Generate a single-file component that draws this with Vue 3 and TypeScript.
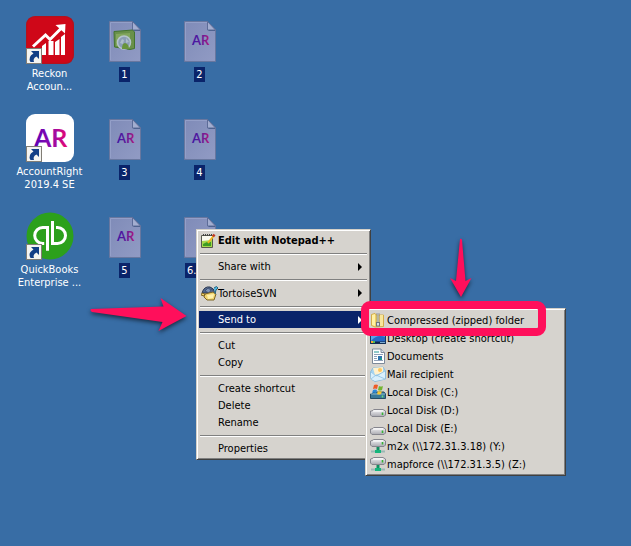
<script setup lang="ts">
interface DesktopItem {
  kind: 'reckon' | 'ar' | 'qb' | 'doc-image' | 'doc-ar' | 'doc-blank'
  lines: string[]
  selected?: boolean
  cut?: boolean
}
interface MenuItem {
  label: string
  icon?: string
  bold?: boolean
  sub?: boolean
  active?: boolean
}

const items: DesktopItem[] = [
  { kind: 'reckon', lines: ['Reckon', 'Accoun...'] },
  { kind: 'doc-image', lines: ['1'], selected: true },
  { kind: 'doc-ar', lines: ['2'], selected: true },
  { kind: 'ar', lines: ['AccountRight', '2019.4 SE'] },
  { kind: 'doc-ar', lines: ['3'], selected: true },
  { kind: 'doc-ar', lines: ['4'], selected: true },
  { kind: 'qb', lines: ['QuickBooks', 'Enterprise ...'] },
  { kind: 'doc-ar', lines: ['5'], selected: true },
  { kind: 'doc-blank', lines: ['6.'], selected: true, cut: true },
]

const groups: MenuItem[][] = [
  [{ label: 'Edit with Notepad++', icon: 'notepad', bold: true }],
  [{ label: 'Share with', sub: true }],
  [{ label: 'TortoiseSVN', icon: 'tortoise', sub: true }],
  [{ label: 'Send to', sub: true, active: true }],
  [{ label: 'Cut' }, { label: 'Copy' }],
  [{ label: 'Create shortcut' }, { label: 'Delete' }, { label: 'Rename' }],
  [{ label: 'Properties' }],
]

const targets: MenuItem[] = [
  { label: 'Compressed (zipped) folder', icon: 'zip' },
  { label: 'Desktop (create shortcut)', icon: 'desktop' },
  { label: 'Documents', icon: 'document' },
  { label: 'Mail recipient', icon: 'mail' },
  { label: 'Local Disk (C:)', icon: 'system' },
  { label: 'Local Disk (D:)', icon: 'disk' },
  { label: 'Local Disk (E:)', icon: 'disk' },
  { label: 'm2x (\\\\172.31.3.18) (Y:)', icon: 'network' },
  { label: 'mapforce (\\\\172.31.3.5) (Z:)', icon: 'network' },
]
</script>

<template>
  <main class="desktop">
    <svg class="defs" aria-hidden="true">
      <defs>
        <linearGradient id="ar-fill" x1="0" y1="0" x2="1" y2="0">
          <stop offset="0" stop-color="#5a00b4" />
          <stop offset="0.5" stop-color="#8a0bb0" />
          <stop offset="1" stop-color="#f0086c" />
        </linearGradient>
        <linearGradient id="ar-fill-dim" x1="0" y1="0" x2="1" y2="0">
          <stop offset="0" stop-color="#3c14a4" />
          <stop offset="0.5" stop-color="#5c1a9c" />
          <stop offset="1" stop-color="#b0187c" />
        </linearGradient>
        <linearGradient id="page-fill" x1="0" y1="0" x2="1" y2="1">
          <stop offset="0" stop-color="#7f8bb8" />
          <stop offset="1" stop-color="#919bc4" />
        </linearGradient>
        <linearGradient id="drive-fill" x1="0" y1="0" x2="0" y2="1">
          <stop offset="0" stop-color="#f4f4f6" />
          <stop offset="1" stop-color="#a9a9b0" />
        </linearGradient>
      </defs>
    </svg>

    <div class="icons">
      <button v-for="(item, i) in items" :key="i" type="button" class="item">
        <svg class="glyph" width="48" height="48" viewBox="0 0 48 48" aria-hidden="true">
          <template v-if="item.kind === 'reckon'">
            <rect width="48" height="48" rx="10" fill="#cf0718" />
            <path d="M.6 30V10Q.6.6 10 .6H38Q47.4.6 47.4 10V38Q47.4 47.4 38 47.4H16" fill="none" stroke="#b3121d" stroke-width="1.2" />
            <path d="M16 39V30l4-3v12zM22.500 39V25h5V39zM29 39V26l4.500-3v16zM35 39V21l4-3v21z" fill="#fff" />
            <path d="M7 30.500L19.500 19 24 23.500 35 12.500" fill="none" stroke="#fff" stroke-width="3" />
            <path d="M29.500 9L39.500 8 39 17.500z" fill="#fff" />
          </template>
          <template v-else-if="item.kind === 'ar'">
            <rect width="48" height="48" rx="9" fill="#fff" />
            <text class="logo" x="8" y="33" font-size="25" fill="url(#ar-fill)">AR</text>
          </template>
          <template v-else-if="item.kind === 'qb'">
            <circle cx="24" cy="24" r="23.500" fill="#2ca01c" />
            <path d="M21.500 38.700V15.500H16.700a8 8 0 0 0 0 16h1.500M26.500 9V31.500H31.500a8 8 0 0 0 0-16h-1.500" fill="none" stroke="#fff" stroke-width="3" />
          </template>
          <template v-else>
            <path d="M8.500 5.500H31.500L39.500 14V45.500H8.500z" fill="url(#page-fill)" stroke="#68779f" />
            <path d="M9.500 44V6.500H31" fill="none" stroke="#949fc8" />
            <path d="M31.500 5.500V14H39.500z" fill="#a3aed0" stroke="#5d6c98" />
            <path d="M32.500 14.500H39" stroke="#4e628f" />
            <template v-if="item.kind === 'doc-image'">
              <path d="M13 15.500L31.500 14 33.500 16V32.500L29 33.500 13.500 31z" fill="#69904a" stroke="#43742f" />
              <path d="M15 18l14-1v14l-14-1z" fill="#82a65d" />
              <circle cx="23" cy="26.500" r="6.500" fill="#8b9db5" stroke="#b5c4cb" stroke-width="1.500" />
              <path d="M19 27l2-4 2 1-1 4zM25 22l3 4-3 1z" fill="#adbdca" />
              <path d="M21 33q0-6 3-6 4 1 4 6z" fill="#68943a" />
            </template>
            <text v-if="item.kind === 'doc-ar'" class="logo" x="16" y="29" font-size="13" fill="url(#ar-fill-dim)">AR</text>
          </template>
          <g v-if="!item.selected">
            <rect x=".5" y="32.500" width="15" height="15" fill="#f4f4f1" stroke="#817d75" />
            <path d="M5 35H13V43L10.500 40.500Q6.500 42.500 8 46H4.500Q1.500 41 7.500 37.500z" fill="#123f86" />
          </g>
        </svg>
        <span class="label" :class="{ selected: item.selected, cut: item.cut }">
          <span v-for="line in item.lines" :key="line" class="line">{{ line }}</span>
        </span>
      </button>
    </div>

    <div class="menu context" role="menu" aria-label="File actions">
      <div v-for="(group, g) in groups" :key="g" class="group">
        <button
          v-for="entry in group"
          :key="entry.label"
          type="button"
          role="menuitem"
          class="entry"
          :class="{ bold: entry.bold, active: entry.active, tall: entry.icon === 'tortoise' }"
        >
          <span class="slot">
            <svg v-if="entry.icon === 'notepad'" width="16" height="16" viewBox="0 0 16 16" aria-hidden="true">
              <path d="M.500 2.500H11.500V14.500H.500z" fill="#f9f9ef" stroke="#56594d" />
              <path d="M1 8l10-1v7H1z" fill="#a5d84c" />
              <path d="M2 11q5-3 8-2v4H2z" fill="#3c9c23" />
              <path d="M2 2h9" stroke="#444" stroke-width="2" stroke-dasharray="1 1" />
              <path d="M7 10L12.500 3" stroke="#eeb51f" stroke-width="2" />
              <path d="M12 3.500l1.500-2" stroke="#c13524" stroke-width="2.500" />
            </svg>
            <svg v-else-if="entry.icon === 'tortoise'" width="18" height="16" viewBox="0 0 18 16" aria-hidden="true">
              <path d="M1 8Q3 1 9 2q4 1 5 6z" fill="#526990" stroke="#29364f" />
              <path d="M4 6l3-3 3 2-2 3zM10 4l3 2" fill="#8094b6" stroke="#38496b" stroke-width=".8" />
              <path d="M1 8l3 1-1 2-3-1zM4 9l8-2 3 2-2 6-7 0-3-3z" fill="#f1d46e" stroke="#7f6626" />
              <path d="M6 10l7-1-1 4-5 1z" fill="#fff2ae" />
              <path d="M13 3q3-3 4 0l-2 2-1 4" fill="#4bb4df" stroke="#26647f" />
            </svg>
          </span>
          <span>{{ entry.label }}</span>
          <svg v-if="entry.sub" class="caret" width="4" height="8" viewBox="0 0 4 8" aria-hidden="true">
            <path d="M0 0L4 4 0 8z" fill="currentColor" />
          </svg>
        </button>
      </div>
    </div>

    <div class="menu send" role="menu" aria-label="Send to">
      <button v-for="entry in targets" :key="entry.label" type="button" role="menuitem" class="target">
        <svg width="16" height="16" viewBox="0 0 16 16" aria-hidden="true">
          <template v-if="entry.icon === 'zip'">
            <path d="M1.500 2.500L5 1.500 6.500 3H13.500V14.500L5 15 1.500 13.500z" fill="#edcf67" stroke="#d3ac48" />
            <path d="M2 3l3-1v12l-3-1z" fill="#fff1a4" />
            <path d="M10 3h3v11h-3z" fill="#f8e69a" />
            <path d="M8 1.500V13" stroke="#59616c" stroke-width="3" stroke-dasharray="1 1" />
            <path d="M8 1V12" stroke="#c9d1dc" />
            <rect x="6.500" y="10.500" width="3" height="3.500" fill="#dce0e5" stroke="#6e7681" />
          </template>
          <template v-else-if="entry.icon === 'desktop'">
            <rect x=".5" y="1.500" width="15" height="12" fill="#2668c6" stroke="#17385f" />
            <path d="M1 2h14v5Q7 4 1 11z" fill="#5aa4ec" />
            <path d="M1 12.500h14" stroke="#10264a" stroke-width="2" />
            <path d="M1 11h2v2H1z" fill="#f5a42f" />
            <path d="M3 11h2v2H3z" fill="#4dbd56" />
            <path d="M10 12.500h5" stroke="#7facce" />
          </template>
          <template v-else-if="entry.icon === 'document'">
            <path d="M2.500 1H11L14.500 4.500V15.500H2.500z" fill="#fff" stroke="#7d8999" />
            <path d="M11 1v3.500h3.500" fill="#d5e0ea" stroke="#7d8999" />
            <path d="M4 4h5" stroke="#249595" />
            <path d="M4 6.500h9M4 8.500h3M4 10.500h3M4 12.500h9" stroke="#8fa0b8" />
            <rect x="8" y="8" width="4" height="4" fill="#2e72ad" />
            <path d="M10 10h2v2h-2z" fill="#1b9b91" />
          </template>
          <template v-else-if="entry.icon === 'mail'">
            <path d="M.5 6L3 2 13 1 15.500 5V13L5 15.500 1 13z" fill="#a6d5f1" stroke="#8dbcd9" />
            <path d="M3 2l10-1v6L5 9z" fill="#fff1cd" />
            <circle cx="10" cy="4" r="2" fill="#ffc65b" />
            <path d="M1 6l6 4 8-5v8L5 15l-4-2z" fill="#d8effc" />
            <path d="M1 13l5-4 9 4M1 6l5 4 9-5" fill="none" stroke="#8dc0e2" stroke-width=".8" />
          </template>
          <template v-else-if="entry.icon === 'system'">
            <path d="M2 10L4 8H14L15.500 10V14.500H.500V10z" fill="#397999" stroke="#254c66" />
            <path d="M1 10h14" stroke="#8bb8ce" />
            <path d="M4 1q2-1 4 0L7 5Q5 4 3 5z" fill="#ee5a26" />
            <path d="M9 2q2 1 4 0l-1 4q-2 1-4 0z" fill="#73b52f" />
            <path d="M3 6q2-1 4 0l-1 3q-2-1-4 0z" fill="#2c89d9" />
            <path d="M8 7q2 1 4 0l-1 3q-2 1-4 0z" fill="#f9c72f" />
            <path d="M12.500 11.500v2" stroke="#6cdf7a" stroke-width="1.500" />
          </template>
          <template v-else-if="entry.icon === 'disk'">
            <path d="M2 9L4 7.500H13L15.500 9V13L14 14.500H2L.500 13V9z" fill="url(#drive-fill)" stroke="#85858d" />
            <path d="M3 9h10" stroke="#fff" />
            <path d="M12.500 10.500v2.500" stroke="#35b235" stroke-width="1.600" />
          </template>
          <template v-else>
            <path d="M2 2.500L4 1.500H13L15.500 3V7L14 8.500H2L.500 7V3z" fill="url(#drive-fill)" stroke="#85858d" />
            <path d="M3 3h10" stroke="#fff" />
            <path d="M12.500 4v2.500" stroke="#35b235" stroke-width="1.600" />
            <path d="M8 9v4" stroke="#118e62" stroke-width="3" />
            <path d="M1 13.500h14" stroke="#9bb8b5" stroke-width="2" />
            <path d="M5 13.500h6" stroke="#16b57c" stroke-width="3" />
          </template>
        </svg>
        <span>{{ entry.label }}</span>
      </button>
    </div>

    <div class="highlight"></div>
    <svg class="pointer right" width="100" height="38" viewBox="0 0 100 38" aria-hidden="true">
      <path d="M1 14L73.500 11.500 70.500 3 96.500 21 68.500 36 72.500 27 2 17Q-.500 15 1 14z" fill="#ff0f5b" />
    </svg>
    <svg class="pointer down" width="26" height="62" viewBox="0 0 26 62" aria-hidden="true">
      <path d="M12 2Q13.500 1 14 3L17.500 44 23.500 41 13 60 2 41 8 44z" fill="#ff0f5b" />
    </svg>
  </main>
</template>

<style>
body {
  margin: 0;
  background: #386da5;
}
</style>

<style scoped>
.desktop {
  position: relative;
  box-sizing: border-box;
  min-height: 100vh;
  padding: 16px 12px;
  overflow: hidden;
  background: #386da5;
  font-family: "DejaVu Sans Condensed", Tahoma, "DejaVu Sans", sans-serif;
  font-size: 11px;
  line-height: 13px;
}
.defs {
  position: absolute;
  width: 0;
  height: 0;
}
button {
  margin: 0;
  padding: 0;
  border: 0;
  background: none;
  color: inherit;
  font: inherit;
  text-align: left;
  white-space: nowrap;
}
.icons {
  display: grid;
  grid-template-columns: repeat(3, 75px);
  grid-auto-rows: 98px;
}
.item {
  display: flex;
  flex-direction: column;
  align-items: center;
  gap: 3px;
  color: #fff;
}
.glyph {
  display: block;
  flex: none;
}
.logo {
  font-family: Lato, "Open Sans", sans-serif;
  font-weight: 700;
}
.label {
  text-align: center;
}
.line {
  display: block;
}
.selected {
  padding: 1px 2px;
  background: #0a246a;
}
.cut {
  width: 25px;
  text-align: left;
}
.menu {
  position: absolute;
  box-sizing: border-box;
  padding: 2px;
  border: 1px solid;
  border-color: #d4d0c8 #404040 #404040 #d4d0c8;
  background: #d6d3ce;
  box-shadow: inset 1px 1px #fff, inset -1px -1px #808080;
  color: #000;
}
.context {
  left: 196px;
  top: 229px;
  width: 175px;
}
.group + .group::before {
  content: "";
  display: block;
  height: 1px;
  margin: 4px 1px 3px;
  border-top: 1px solid #808080;
  background: #fff;
}
.entry {
  display: flex;
  align-items: center;
  width: 100%;
  height: 17px;
}
.tall {
  height: 18px;
}
.bold {
  font-weight: bold;
}
.active {
  background: #0a246a;
  color: #fff;
}
.slot {
  display: flex;
  flex: none;
  width: 17px;
  padding-left: 2px;
}
.slot svg {
  flex: none;
}
.caret {
  margin: 0 6px 0 auto;
}
.send {
  left: 365px;
  top: 308px;
  width: 201px;
}
.target {
  display: flex;
  align-items: center;
  gap: 1px;
  width: 100%;
  height: 18px;
  padding-left: 2px;
}
.highlight {
  position: absolute;
  left: 361px;
  top: 301px;
  box-sizing: border-box;
  width: 185px;
  height: 35px;
  border: 8px solid #ff0f5b;
  border-radius: 9px;
}
.pointer {
  position: absolute;
  overflow: visible;
  filter: drop-shadow(0 2px 2px rgba(0, 0, 0, 0.6));
}
.right {
  left: 90px;
  top: 295px;
}
.down {
  left: 448px;
  top: 237px;
}
</style>
